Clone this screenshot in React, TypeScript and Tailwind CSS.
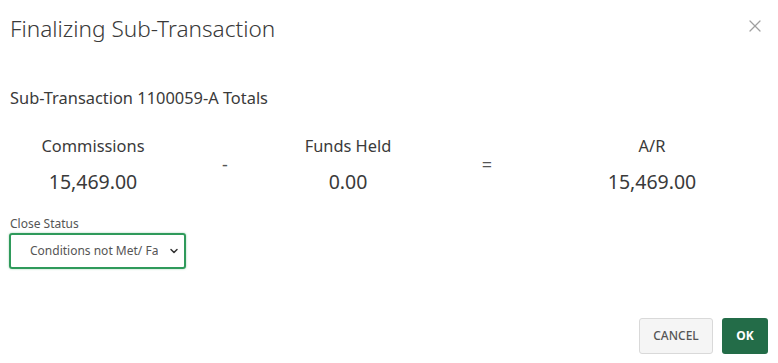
import { ChevronDown, X } from 'lucide-react';

const font = { fontFamily: '"Noto Sans", "Open Sans", Arial, sans-serif' };

function Total({ label, value, width }: { label: string; value: string; width: string }) {
  return (
    <div className={`${width} flex flex-col items-center text-[#3a3a3a]`}>
      <div className="text-[16.4px] leading-[24px]">{label}</div>
      <div className="mt-[10px] text-[19.5px] leading-[28px]">{value}</div>
    </div>
  );
}

function Sign({ sign, width }: { sign: string; width: string }) {
  return (
    <div className={`${width} flex justify-center pt-[18px] text-[18px] leading-[24px] text-[#555]`}>{sign}</div>
  );
}

export default function App() {
  return (
    <div className="w-[778px] h-[363px] bg-white flex flex-col px-[10px]" style={font}>
      <div className="flex items-start justify-between pt-[13px]">
        <h1 className="text-[22.6px] font-light leading-[32px] text-[#3a3a3a]">Finalizing Sub-Transaction</h1>
        <button className="mt-[3px] mr-[3px] text-[#a0a0a0]">
          <X className="w-[20px] h-[20px]" strokeWidth={1.5} />
        </button>
      </div>

      <div className="mt-[41px] text-[16.4px] leading-[24px] text-[#3a3a3a]">Sub-Transaction 1100059-A Totals</div>

      <div className="mt-[24px] flex -ml-[10px]">
        <Total label="Commissions" value="15,469.00" width="w-[186px]" />
        <Sign sign="-" width="w-[78px]" />
        <Total label="Funds Held" value="0.00" width="w-[168px]" />
        <Sign sign="=" width="w-[110px]" />
        <Total label="A/R" value="15,469.00" width="w-[220px]" />
      </div>

      <div className="mt-[20px] text-[12px] leading-[16px] text-[#555]">Close Status</div>
      <div className="mt-[1px] w-[177px] h-[36px] -ml-[1px] rounded-[3px] border-2 border-[#2f9a5b] shadow-[0_0_2px_rgba(47,154,91,0.5)] flex items-center justify-between pl-[19px] pr-[4px]">
        <span className="text-[12px] text-[#555] whitespace-nowrap overflow-hidden">Conditions not Met/ Fa</span>
        <ChevronDown className="w-[12px] h-[12px] text-[#333]" strokeWidth={3} />
      </div>

      <div className="mt-auto mb-[9px] flex justify-end gap-[9px]">
        <button className="w-[74px] h-[36px] rounded-[3px] border border-[#d9d9d9] bg-[#f5f5f5] text-[12px] font-medium text-[#555]">
          CANCEL
        </button>
        <button className="w-[46px] h-[36px] rounded-[3px] bg-[#236c48] text-[12px] font-bold text-white">OK</button>
      </div>
    </div>
  );
}
